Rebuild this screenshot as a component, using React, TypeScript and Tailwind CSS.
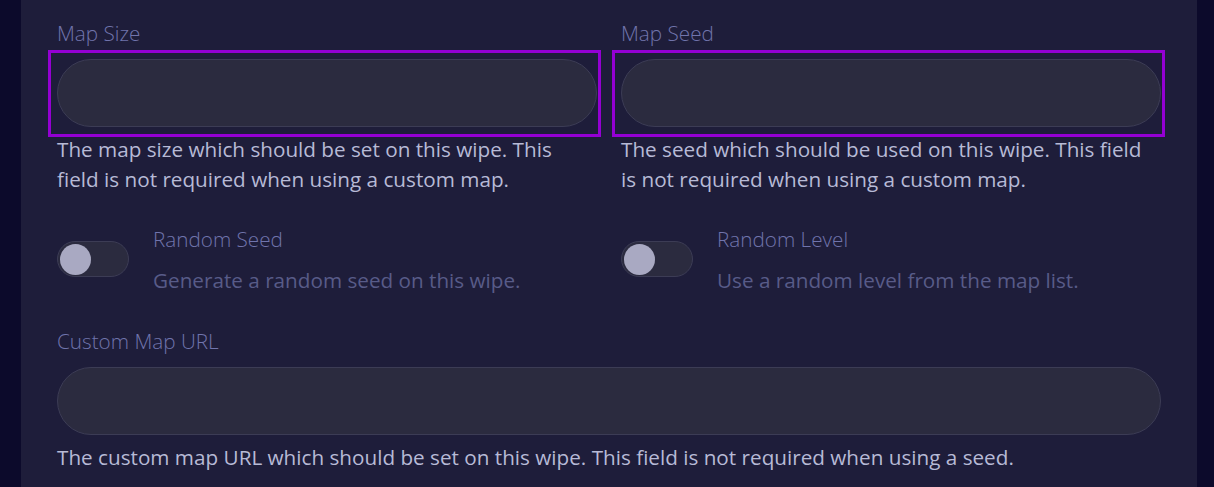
import React from "react";

const font = { fontFamily: '"Open Sans", "Noto Sans", sans-serif' };

function Field({ label, help, highlight }: { label: string; help: string; highlight?: boolean }) {
  return (
    <div className="flex flex-col">
      <label className="text-[20.7px] leading-[30px] font-light text-[#7074ac]">{label}</label>
      <div className="relative mt-[11px]">
        <div className="h-[68px] rounded-full bg-[#2b2b3f] border border-[#3c3c55]" />
        {highlight && (
          <div className="absolute -left-[9px] -top-[9px] -right-[4px] -bottom-[10px] border-[3px] border-[#9400d3] pointer-events-none" />
        )}
      </div>
      <p className="mt-[7px] pr-1 text-[20.7px] leading-[30px] text-[#b7bad6]">{help}</p>
    </div>
  );
}

function Toggle({ label, desc }: { label: string; desc: string }) {
  return (
    <div className="flex items-start gap-6">
      <div className="mt-[17px] w-[72px] h-[36px] rounded-full bg-[#2b2b3f] border border-[#3c3c55] flex items-center pl-[2px] shrink-0">
        <div className="w-[31px] h-[31px] rounded-full bg-[#a9a9c2]" />
      </div>
      <div className="flex flex-col">
        <span className="text-[20.7px] leading-[30px] font-light text-[#7074ac]">{label}</span>
        <span className="mt-[11px] text-[20.7px] leading-[30px] text-[#585b88]">{desc}</span>
      </div>
    </div>
  );
}

export default function App() {
  return (
    <div className="min-h-[487px] bg-[#0c0a2b] flex pl-[21px] pr-[17px]" style={font}>
      <div className="flex-1 bg-[#1e1d3a] px-9 pt-[18px] pb-6">
        <div className="grid grid-cols-2 gap-x-6">
          <Field
            label="Map Size"
            help="The map size which should be set on this wipe. This field is not required when using a custom map."
            highlight
          />
          <Field
            label="Map Seed"
            help="The seed which should be used on this wipe. This field is not required when using a custom map."
            highlight
          />
        </div>
        <div className="grid grid-cols-2 gap-x-6 mt-[30px]">
          <Toggle label="Random Seed" desc="Generate a random seed on this wipe." />
          <Toggle label="Random Level" desc="Use a random level from the map list." />
        </div>
        <div className="mt-[31px]">
          <Field
            label="Custom Map URL"
            help="The custom map URL which should be set on this wipe. This field is not required when using a seed."
          />
        </div>
      </div>
    </div>
  );
}
